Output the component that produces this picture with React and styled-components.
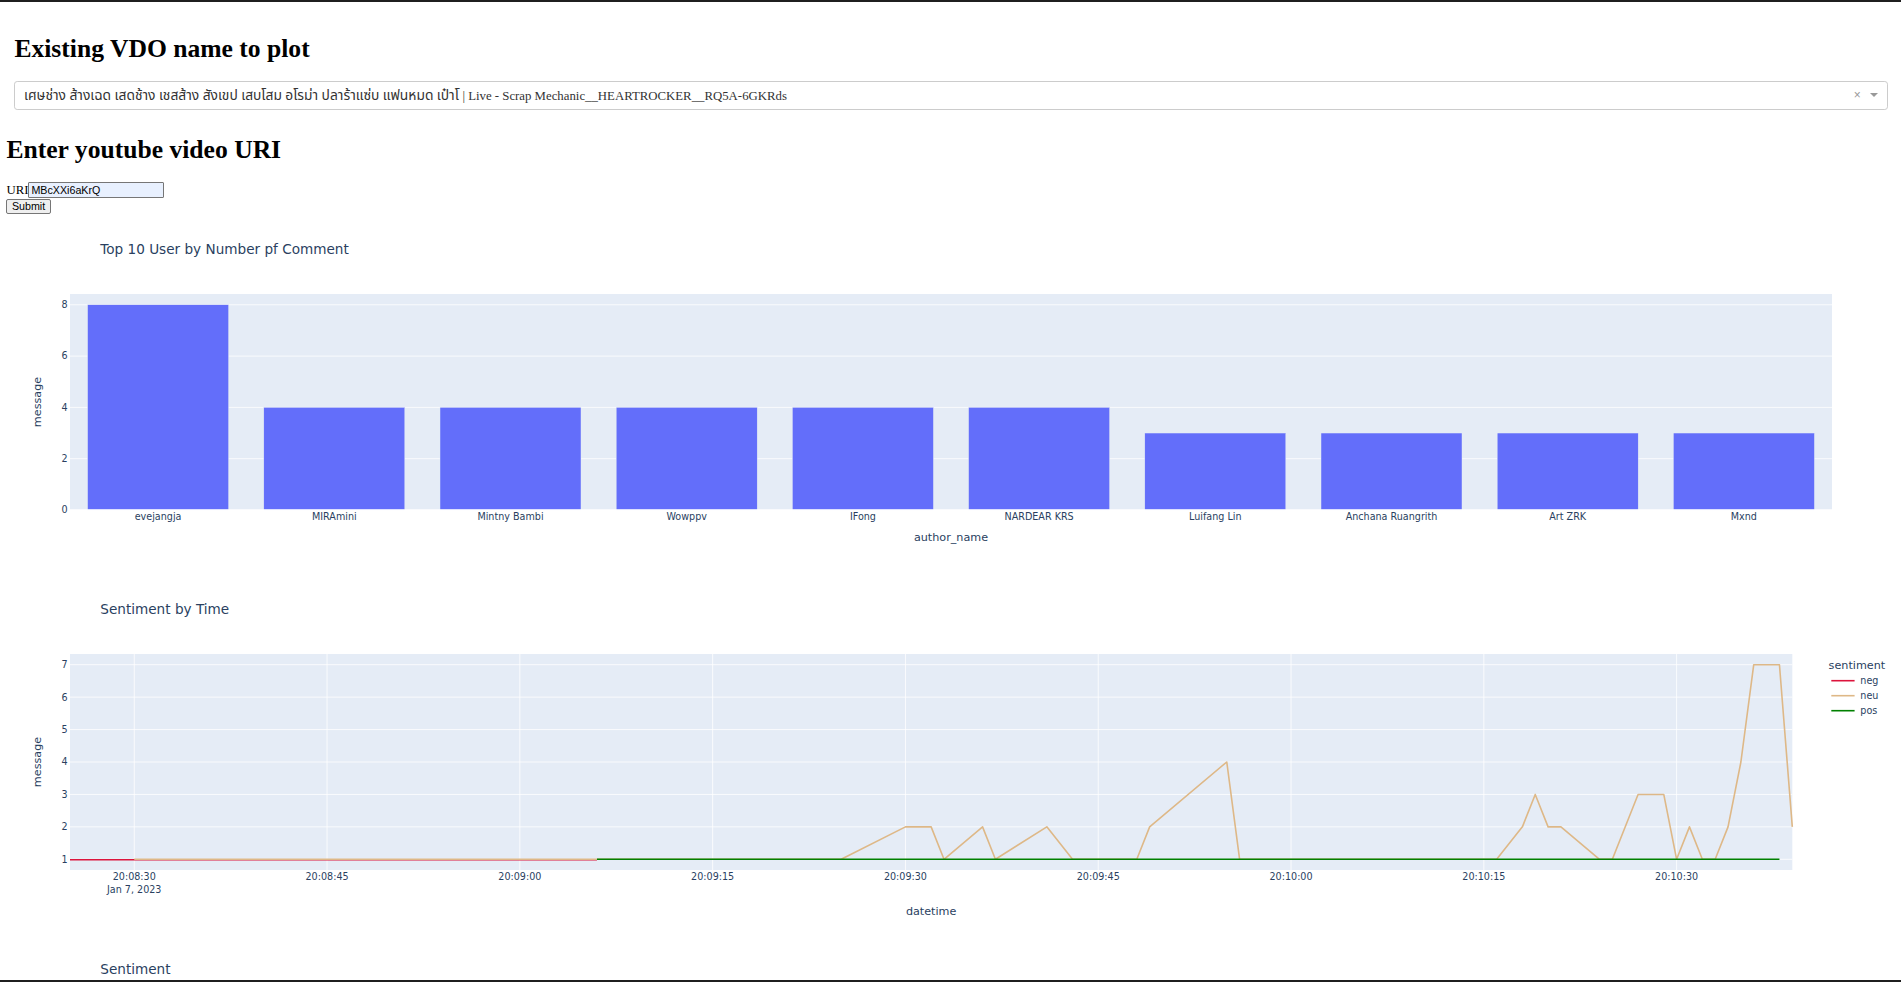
import React from 'react';
import styled, { createGlobalStyle } from 'styled-components';

const GlobalStyle = createGlobalStyle`
  html, body {
    margin: 0;
    padding: 0;
    background: #ffffff;
    overflow: hidden;
  }
  body {
    font-family: "Liberation Serif", "Times New Roman", serif;
    font-size: 12.8px;
    color: #000;
  }
`;

const PLOT_FONT = '"DejaVu Sans", Verdana, "Open Sans", arial, sans-serif';
const INK = '#2a3f5f';
const FIG_W = 1888;
const FIG_H = 360;

const Frame = styled.div`
  box-sizing: border-box;
  height: 100vh;
  overflow: hidden;
  border-top: 2px solid #1f1f1f;
  border-bottom: 2px solid #1f1f1f;
  padding: 6.6px 6.4px 0;
`;

const PickerSection = styled.div`
  padding: 8px 6.5px 8px 8px;
`;

const Heading = styled.h1`
  margin: 17.15px 0;
  font-size: 25.6px;
  font-weight: bold;
  line-height: normal;
`;

const Select = styled.div`
  margin-top: 3px;
  box-sizing: border-box;
  height: 29px;
  border: 1px solid #cccccc;
  border-radius: 3.2px;
  background: #ffffff;
  display: flex;
  align-items: center;
  padding-left: 8.6px;
`;

const SelectValue = styled.div`
  flex: 1;
  min-width: 0;
  white-space: nowrap;
  overflow: hidden;
  font-size: 12.8px;
  color: #333333;
  font-family: "Liberation Serif", "Noto Sans Thai", "Tahoma", "DejaVu Sans", serif;
`;

const ThaiPart = styled.span`
  font-size: 13.8px;
`;

const ClearZone = styled.span`
  width: 13.6px;
  text-align: center;
  color: #999999;
  font-size: 12px;
  font-family: "Liberation Sans", Arial, sans-serif;
  line-height: 1;
`;

const ArrowZone = styled.span`
  width: 20px;
  padding-right: 3px;
  display: flex;
  justify-content: center;
  align-items: center;
`;

const Caret = styled.span`
  width: 0;
  height: 0;
  border-style: solid;
  border-color: #999999 transparent transparent;
  border-width: 4px 4px 2px;
  margin-top: 2px;
`;

const FormRow = styled.div`
  display: flex;
  align-items: center;
  height: 16px;
  margin-top: 0.5px;
`;

const FieldLabel = styled.label`
  font-size: 12.8px;
`;

const TextInput = styled.input`
  box-sizing: border-box;
  width: 136px;
  height: 15.5px;
  margin: 0;
  padding: 0 2px;
  border: 1px solid #767676;
  border-radius: 1px;
  background: #e8f0fe;
  font-family: "Liberation Sans", Arial, sans-serif;
  font-size: 10.7px;
  color: #000;
  outline: none;
`;

const SubmitButton = styled.button`
  display: block;
  box-sizing: border-box;
  height: 15.5px;
  margin: 0.5px 0 0;
  padding: 0 4.5px;
  border: 1px solid #767676;
  border-radius: 2px;
  background: #efefef;
  font-family: "Liberation Sans", Arial, sans-serif;
  font-size: 10.7px;
  line-height: 1;
  color: #000;
`;

const Figure = styled.div`
  width: 100%;
  height: ${FIG_H}px;
`;

const FigSvg = styled.svg`
  display: block;
  width: ${FIG_W}px;
  height: ${FIG_H}px;
`;

const PlotTitle = styled.text`
  font-family: ${PLOT_FONT};
  font-size: 13.6px;
  fill: ${INK};
`;

const TickLabel = styled.text`
  font-family: ${PLOT_FONT};
  font-size: 9.6px;
  fill: ${INK};
`;

const AxisTitle = styled.text`
  font-family: ${PLOT_FONT};
  font-size: 11.2px;
  fill: ${INK};
`;

const LegendTitle = styled.text`
  font-family: ${PLOT_FONT};
  font-size: 11.2px;
  fill: ${INK};
`;

const LegendLabel = styled.text`
  font-family: ${PLOT_FONT};
  font-size: 9.6px;
  fill: ${INK};
`;

const PlotBg = styled.rect`
  fill: #e5ecf6;
`;

const GridLine = styled.line`
  stroke: #ffffff;
  stroke-width: ${(p) => p.$w || 0.8};
`;

const Bar = styled.rect`
  fill: #636efa;
  stroke: #e5ecf6;
  stroke-width: 0.4;
`;

const Trace = styled.polyline`
  fill: none;
  stroke: ${(p) => p.$color};
  stroke-width: 1.6;
  stroke-linejoin: round;
`;

/* ---------------- Bar chart ---------------- */

const users = [
  ['evejangja', 8],
  ['MIRAmini', 4],
  ['Mintny Bambi', 4],
  ['Wowppv', 4],
  ['IFong', 4],
  ['NARDEAR KRS', 4],
  ['Luifang Lin', 3],
  ['Anchana Ruangrith', 3],
  ['Art ZRK', 3],
  ['Mxnd', 3],
];

function TopUsersChart() {
  const L = 64;
  const R = 1826;
  const T = 80;
  const B = 296;
  const cw = (R - L) / users.length;
  const y = (v) => B - (v / 8.42) * (B - T);
  return (
    <Figure>
      <FigSvg viewBox={`0 0 ${FIG_W} ${FIG_H}`}>
        <PlotTitle x={94.3} y={39.5}>Top 10 User by Number pf Comment</PlotTitle>
        <PlotBg x={L} y={T} width={R - L} height={B - T} />
        {[2, 4, 6, 8].map((v) => (
          <GridLine key={v} x1={L} x2={R} y1={y(v)} y2={y(v)} />
        ))}
        {users.map(([name, v], i) => (
          <Bar
            key={name}
            x={L + i * cw + 0.1 * cw}
            y={y(v)}
            width={0.8 * cw}
            height={B - y(v)}
          />
        ))}
        <GridLine x1={L} x2={R} y1={B} y2={B} $w={1.6} />
        {[0, 2, 4, 6, 8].map((v) => (
          <TickLabel key={v} x={61.6} y={y(v) + 3.4} textAnchor="end">
            {v}
          </TickLabel>
        ))}
        {users.map(([name], i) => (
          <TickLabel key={name} x={L + (i + 0.5) * cw} y={306.3} textAnchor="middle">
            {name}
          </TickLabel>
        ))}
        <AxisTitle x={(L + R) / 2} y={327} textAnchor="middle">author_name</AxisTitle>
        <AxisTitle
          x={0}
          y={0}
          textAnchor="middle"
          transform={`translate(35 ${(T + B) / 2}) rotate(-90)`}
        >
          message
        </AxisTitle>
      </FigSvg>
    </Figure>
  );
}

/* ---------------- Line chart ---------------- */

const negSeries = [
  [0, 1],
  [41, 1],
];

const neuSeries = [
  [5, 1], [60, 1], [65, 2], [67, 2], [68, 1], [71, 2], [72, 1], [76, 2], [78, 1],
  [83, 1], [84, 2], [90, 4], [91, 1], [111, 1], [113, 2], [114, 3], [115, 2],
  [116, 2], [119, 1], [120, 1], [122, 3], [124, 3], [125, 1], [126, 2], [127, 1],
  [128, 1], [129, 2], [130, 4], [131, 7], [133, 7], [134, 2],
];

const posSeries = [
  [41, 1],
  [133, 1],
];

const timeTicks = [
  [5, '20:08:30'],
  [20, '20:08:45'],
  [35, '20:09:00'],
  [50, '20:09:15'],
  [65, '20:09:30'],
  [80, '20:09:45'],
  [95, '20:10:00'],
  [110, '20:10:15'],
  [125, '20:10:30'],
];

const legendItems = [
  ['neg', '#dc143c'],
  ['neu', '#deb887'],
  ['pos', '#008000'],
];

function SentimentTimeChart() {
  const L = 64;
  const R = 1786.3;
  const T = 80;
  const B = 296;
  const x = (s) => L + (s / 134) * (R - L);
  const y = (v) => B - ((v - 0.67) / 6.66) * (B - T);
  const pts = (series, dy = 0) => series.map(([s, v]) => `${x(s)},${y(v) + dy}`).join(' ');
  return (
    <Figure>
      <FigSvg viewBox={`0 0 ${FIG_W} ${FIG_H}`}>
        <PlotTitle x={94.3} y={40}>Sentiment by Time</PlotTitle>
        <PlotBg x={L} y={T} width={R - L} height={B - T} />
        {timeTicks.map(([s]) => (
          <GridLine key={s} x1={x(s)} x2={x(s)} y1={T} y2={B} />
        ))}
        {[1, 2, 3, 4, 5, 6, 7].map((v) => (
          <GridLine key={v} x1={L} x2={R} y1={y(v)} y2={y(v)} />
        ))}
        <Trace $color="#dc143c" points={pts(negSeries, 0.5)} />
        <Trace $color="#deb887" points={pts(neuSeries)} />
        <Trace $color="#008000" points={pts(posSeries)} />
        {[1, 2, 3, 4, 5, 6, 7].map((v) => (
          <TickLabel key={v} x={61.6} y={y(v) + 3.4} textAnchor="end">
            {v}
          </TickLabel>
        ))}
        {timeTicks.map(([s, label]) => (
          <TickLabel key={label} x={x(s)} y={305.5} textAnchor="middle">
            {label}
          </TickLabel>
        ))}
        <TickLabel x={x(5)} y={318.8} textAnchor="middle">Jan 7, 2023</TickLabel>
        <AxisTitle x={(L + R) / 2} y={340.5} textAnchor="middle">datetime</AxisTitle>
        <AxisTitle
          x={0}
          y={0}
          textAnchor="middle"
          transform={`translate(35 ${(T + B) / 2}) rotate(-90)`}
        >
          message
        </AxisTitle>
        <LegendTitle x={1822.6} y={94.5}>sentiment</LegendTitle>
        {legendItems.map(([name, color], i) => {
          const cy = 106.7 + i * 15;
          return (
            <g key={name}>
              <Trace $color={color} points={`1825.3,${cy} 1848.6,${cy}`} />
              <LegendLabel x={1854.3} y={cy + 3.3}>{name}</LegendLabel>
            </g>
          );
        })}
      </FigSvg>
    </Figure>
  );
}

function SentimentChart() {
  return (
    <Figure>
      <FigSvg viewBox={`0 0 ${FIG_W} ${FIG_H}`}>
        <PlotTitle x={94.3} y={40}>Sentiment</PlotTitle>
      </FigSvg>
    </Figure>
  );
}

export default function App() {
  return (
    <>
      <GlobalStyle />
      <Frame>
        <PickerSection>
          <Heading>Existing VDO name to plot</Heading>
          <Select>
            <SelectValue>
              <ThaiPart>เศษช่าง ส้างเฉด เสดช้าง เชสส้าง สังเขป เสบโสม อโรม่า ปลาร้าแซ่บ แฟนหมด เป๋าโ </ThaiPart>
              | Live - Scrap Mechanic__HEARTROCKER__RQ5A-6GKRds
            </SelectValue>
            <ClearZone>×</ClearZone>
            <ArrowZone>
              <Caret />
            </ArrowZone>
          </Select>
        </PickerSection>
        <Heading>Enter youtube video URI</Heading>
        <FormRow>
          <FieldLabel htmlFor="uri">URI</FieldLabel>
          <TextInput id="uri" type="text" defaultValue="MBcXXi6aKrQ" readOnly />
        </FormRow>
        <SubmitButton type="button">Submit</SubmitButton>
        <TopUsersChart />
        <SentimentTimeChart />
        <SentimentChart />
      </Frame>
    </>
  );
}
